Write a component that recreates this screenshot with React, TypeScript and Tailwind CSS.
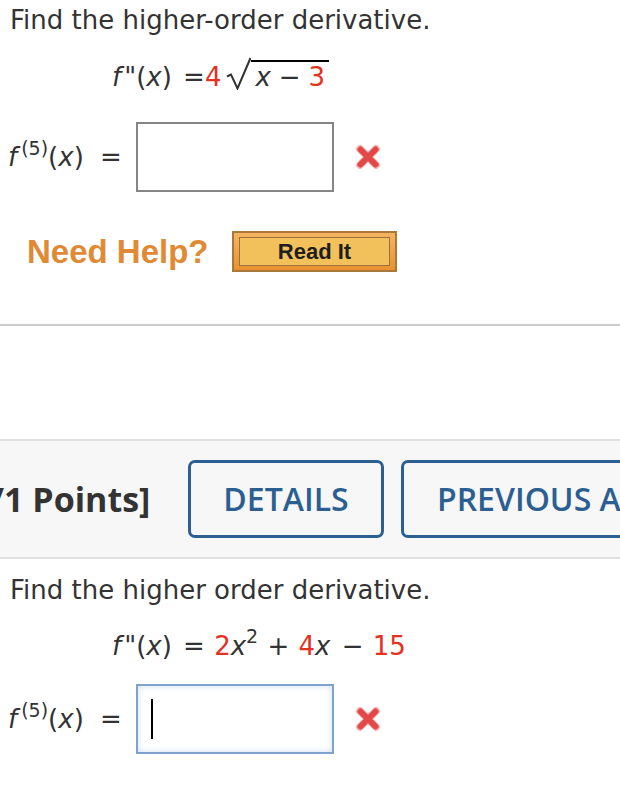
const verdana = { fontFamily: '"DejaVu Sans", Verdana, sans-serif' }
const arial = { fontFamily: '"Liberation Sans", Arial, sans-serif' }
const openSans = { fontFamily: '"Open Sans", "Noto Sans", sans-serif' }

const RedX = () => (
  <svg width="28" height="28" viewBox="0 0 28 28" className="shrink-0">
    <path d="M6 6 L22 22 M22 6 L6 22" stroke="#f08a8a" strokeWidth="8" strokeLinecap="round" opacity="0.6" />
    <path d="M6.5 6.5 L21.5 21.5 M21.5 6.5 L6.5 21.5" stroke="#e24848" strokeWidth="6" strokeLinecap="round" />
  </svg>
)

// radical sign drawn to join the overline
const Radical = () => (
  <svg width="25" height="33" viewBox="0 0 25 33" className="relative top-[4px] shrink-0">
    <path d="M1 19.5 L5 17.5 L11.5 31.5 L24.5 1" fill="none" stroke="#333" strokeWidth="2" strokeLinejoin="miter" />
  </svg>
)

// f with a double prime, as the homework site sets it
const FPrime = () => (
  <>
    <i>f</i>
    <i className="ml-[3px]">"</i>
  </>
)

const FifthLabel = () => (
  <div className="ml-[-2px] w-[128px] shrink-0 text-[26px] text-[#333] whitespace-nowrap [word-spacing:8px]" style={verdana}>
    <i>f</i>
    <span className="ml-[4px] text-[19px] relative top-[-11px]">(5)</span>
    (<i>x</i>) =
  </div>
)

const Red = ({ children }: { children: React.ReactNode }) => <span className="text-[#e3321f]">{children}</span>

export default function App() {
  return (
    <div className="w-[620px] h-[794px] overflow-hidden bg-white text-[#333]" style={verdana}>
      {/* question one */}
      <div className="pl-[10px]">
        <div className="mt-[2px] h-[36px] leading-[36px] text-[26px] whitespace-nowrap">Find the higher-order derivative.</div>

        <div className="mt-[15px] ml-[102px] h-[36px] leading-[36px] text-[26px] whitespace-nowrap flex items-baseline [word-spacing:3px]">
          <span>
            <FPrime />(<i>x</i>) =<Red>4</Red>
          </span>
          <span className="ml-[5px] inline-flex items-baseline">
            <Radical />
            <span className="inline-block border-t-2 border-black leading-[31px] pl-[4px] pr-[4px]">
              <i>x</i>
              <span className="mx-[8px]">−</span>
              <Red>3</Red>
            </span>
          </span>
        </div>

        <div className="mt-[33px] flex items-center">
          <FifthLabel />
          <div className="w-[198px] h-[70px] border-2 border-[#858585] bg-white shrink-0" />
          <div className="ml-[20px]">
            <RedX />
          </div>
        </div>

        <div className="mt-[39px] flex items-center h-[41px]">
          <div className="ml-[17px] w-[205px] text-[33px] font-bold text-[#e08a36]" style={arial}>
            Need Help?
          </div>
          <div className="w-[165px] h-[41px] border-2 border-[#a8783c] bg-gradient-to-b from-[#f5b460] to-[#e8922e] px-[5px] py-[4px]">
            <div className="h-full border border-[#9a7040] bg-[#f2c15c] flex items-center justify-center text-[22px] font-bold text-[#1e1e1e]" style={arial}>
              Read It
            </div>
          </div>
        </div>
      </div>

      <div className="mt-[52px] border-b-2 border-[#cccccc]" />

      {/* question two header */}
      <div className="mt-[113px] border-y-2 border-[#e0e0e0] bg-[#f7f7f7] h-[120px] flex items-center overflow-hidden" style={openSans}>
        <div className="ml-[-10px] w-[198px] shrink-0 text-[34px] font-bold text-[#333] whitespace-nowrap">/1 Points]</div>
        <div className="w-[196px] h-[78px] shrink-0 border-[3px] border-[#2b5f92] rounded-[7px] flex items-center justify-center text-[32px] font-semibold text-[#2b5f92]">
          DETAILS
        </div>
        <div className="ml-[17px] w-[340px] h-[78px] shrink-0 border-[3px] border-[#2b5f92] rounded-[7px] flex items-center pl-[33px] text-[32px] font-semibold text-[#2b5f92] whitespace-nowrap">
          PREVIOUS ANSWERS
        </div>
      </div>

      {/* question two */}
      <div className="pl-[10px]">
        <div className="mt-[13px] h-[36px] leading-[36px] text-[26px] whitespace-nowrap">Find the higher order derivative.</div>

        <div className="mt-[20px] ml-[102px] h-[36px] leading-[36px] text-[26px] whitespace-nowrap [word-spacing:1px]">
          <FPrime />(<i>x</i>)<span className="ml-[2px]"> = </span>
          <Red>2</Red>
          <i>x</i>
          <span className="text-[19px] relative top-[-12px]">2</span> + <Red>4</Red>
          <i>x</i>
          <span className="ml-[2px]"> − </span>
          <Red>15</Red>
        </div>

        <div className="mt-[20px] flex items-center">
          <FifthLabel />
          <div className="w-[198px] h-[70px] border-2 border-[#7fa3cf] bg-white shadow-[inset_0_0_6px_rgba(120,160,220,0.35)] shrink-0 flex items-center pl-[13px]">
            <div className="w-[2px] h-[40px] bg-black" />
          </div>
          <div className="ml-[20px]">
            <RedX />
          </div>
        </div>
      </div>
    </div>
  )
}
